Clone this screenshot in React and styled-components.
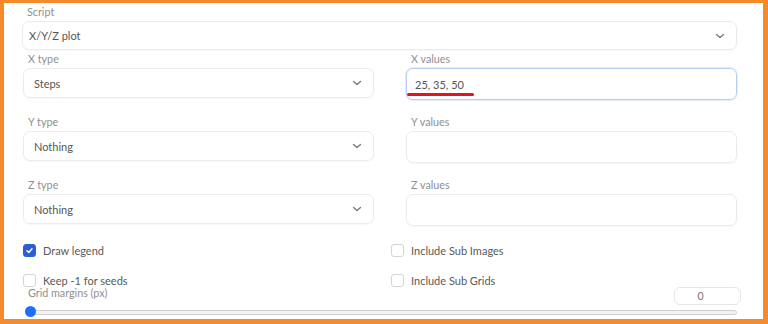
import styled, { createGlobalStyle } from "styled-components";

const GlobalStyle = createGlobalStyle`
    html, body {
        margin: 0;
        padding: 0;
        background: #ffffff;
    }
    body {
        font-family: Lato, "Open Sans", sans-serif;
    }
`;

const Frame = styled.div`
    width: 768px;
    height: 324px;
    box-sizing: border-box;
    border-style: solid;
    border-color: #f58a2c;
    border-width: 3px 5px 5px 4px;
    background: #fff;
    overflow: hidden;
    padding: 0 26px 0 18px;
    display: flex;
    flex-direction: column;
`;

const Label = styled.div`
    font-size: 10.75px;
    color: #8f8f8f;
    height: 18px;
    line-height: 18px;
    padding-left: ${({ inset }) => inset || 6}px;
`;

const ScriptBlock = styled.div`
    display: flex;
    flex-direction: column;
`;

const FieldGrid = styled.div`
    display: grid;
    grid-template-columns: 352px 331px;
    column-gap: 32px;
    row-gap: 13px;
`;

const Field = styled.div`
    display: flex;
    flex-direction: column;
    align-items: stretch;
`;

const SelectBox = styled.div`
    height: ${({ h }) => h}px;
    box-sizing: border-box;
    margin-left: ${({ shift }) => shift || 0}px;
    border: 1px solid #ebebeb;
    border-radius: 7px;
    box-shadow: 0 1px 2px rgba(0, 0, 0, 0.04);
    display: flex;
    align-items: center;
    justify-content: space-between;
    padding: 0 10px 0 ${({ pad }) => pad}px;
    font-size: 11px;
    color: #555;
`;

const Chevron = () => (
    <svg width="12" height="12" viewBox="0 0 12 12">
        <path d="M2.5 4.5 L6 7.5 L9.5 4.5" fill="none" stroke="#7a7a7a" strokeWidth="1.4" strokeLinecap="round" strokeLinejoin="round" />
    </svg>
);

const TextBox = styled.div`
    position: relative;
    height: 32px;
    box-sizing: border-box;
    border: ${({ focused }) => focused ? "1.5px solid #b9cdf3" : "1px solid #ebebeb"};
    box-shadow: ${({ focused }) => focused ? "0 0 0 1px #e4ecfb" : "0 1px 2px rgba(0, 0, 0, 0.04)"};
    border-radius: 7px;
    display: flex;
    align-items: center;
    padding-left: 8px;
    font-size: 11px;
    color: #555;
`;

const Underline = styled.div`
    position: absolute;
    left: 0;
    top: 24px;
    width: 67px;
    height: 3px;
    border-radius: 2px;
    background: #e3141f;
`;

const CheckGrid = styled.div`
    margin-top: 17px;
    display: grid;
    grid-template-columns: 368px 1fr;
    row-gap: 16px;
    padding-left: 1px;
`;

const CheckRow = styled.div`
    display: flex;
    align-items: center;
    gap: 7px;
    height: 14px;
    font-size: 11px;
    color: #5a5a5a;
`;

const Box = styled.div`
    width: 13px;
    height: 13px;
    box-sizing: border-box;
    border-radius: 3px;
    border: 1px solid ${({ checked }) => checked ? "#2b5fd9" : "#d4d4d4"};
    background: ${({ checked }) => checked ? "#2b5fd9" : "#fff"};
    display: flex;
    align-items: center;
    justify-content: center;
`;

const Check = () => (
    <svg width="9" height="9" viewBox="0 0 9 9">
        <path d="M2 4.7 L3.8 6.4 L7 2.8" fill="none" stroke="#fff" strokeWidth="1.5" strokeLinecap="round" strokeLinejoin="round" />
    </svg>
);

const SliderHead = styled.div`
    display: flex;
    justify-content: space-between;
    align-items: flex-start;
    height: 18px;
    padding-left: 6px;
    margin-right: -4px;
`;

const SliderLabel = styled.div`
    font-size: 10.75px;
    color: #8f8f8f;
    line-height: 12px;
`;

const NumberBox = styled.div`
    width: 67px;
    height: 18px;
    box-sizing: border-box;
    border: 1px solid #e6e6e6;
    border-radius: 6px;
    font-size: 10.5px;
    color: #777;
    display: flex;
    align-items: center;
    justify-content: center;
    padding-right: 14px;
`;

const SliderArea = styled.div`
    position: relative;
    height: 14px;
    margin-left: 6px;
    display: flex;
    align-items: center;
`;

const Track = styled.div`
    flex: 1;
    height: 5px;
    box-sizing: border-box;
    border: 1px solid #cfcfcf;
    border-radius: 3px;
    background: #f2f2f2;
`;

const Thumb = styled.div`
    position: absolute;
    left: -3px;
    top: 1px;
    width: 11px;
    height: 11px;
    border-radius: 50%;
    background: #1f6ff2;
`;

const rows = [
    { type: "X type", typeValue: "Steps", values: "X values", value: "25, 35, 50", focused: true },
    { type: "Y type", typeValue: "Nothing", values: "Y values", value: "" },
    { type: "Z type", typeValue: "Nothing", values: "Z values", value: "" },
];

export default function App() {
    return (
        <>
            <GlobalStyle />
            <Frame>
                <ScriptBlock>
                    <Label inset={5}>Script</Label>
                    <SelectBox h={29} pad={6}>
                        X/Y/Z plot
                        <Chevron />
                    </SelectBox>
                </ScriptBlock>

                <FieldGrid>
                    {rows.flatMap(row => [
                        <Field key={row.type}>
                            <Label>{row.type}</Label>
                            <SelectBox h={30} pad={10} shift={1}>
                                {row.typeValue}
                                <Chevron />
                            </SelectBox>
                        </Field>,
                        <Field key={row.values}>
                            <Label inset={5}>{row.values}</Label>
                            <TextBox focused={row.focused}>
                                {row.value}
                                {row.focused && <Underline />}
                            </TextBox>
                        </Field>
                    ])}
                </FieldGrid>

                <CheckGrid>
                    <CheckRow><Box checked><Check /></Box>Draw legend</CheckRow>
                    <CheckRow><Box />Include Sub Images</CheckRow>
                    <CheckRow><Box />Keep -1 for seeds</CheckRow>
                    <CheckRow><Box />Include Sub Grids</CheckRow>
                </CheckGrid>

                <SliderHead>
                    <SliderLabel>Grid margins (px)</SliderLabel>
                    <NumberBox>0</NumberBox>
                </SliderHead>
                <SliderArea>
                    <Track />
                    <Thumb />
                </SliderArea>
            </Frame>
        </>
    );
}
